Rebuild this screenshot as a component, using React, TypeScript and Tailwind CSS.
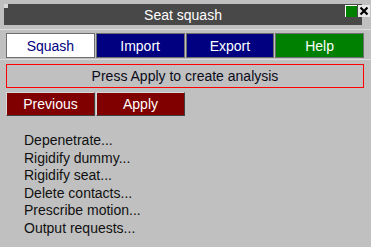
export default function App() {
  const items = [
    "Depenetrate...",
    "Rigidify dummy...",
    "Rigidify seat...",
    "Delete contacts...",
    "Prescribe motion...",
    "Output requests...",
  ];
  const tabs = [
    { label: "Squash", cls: "bg-white text-[#000080]" },
    { label: "Import", cls: "bg-[#000080] text-white" },
    { label: "Export", cls: "bg-[#000080] text-white" },
    { label: "Help", cls: "bg-[#008000] text-white" },
  ];

  return (
    <div
      className="relative w-[371px] h-[247px] overflow-hidden bg-[#c0c0c0] text-[14px] leading-none"
      style={{ fontFamily: '"Liberation Sans", Arial, sans-serif' }}
    >
      {/* Title bar */}
      <div className="relative mt-[4px] ml-[4px] w-[358px] h-[21px] bg-[#484848] text-white flex items-center justify-center">
        <span className="absolute left-0 top-0 w-[4px] h-[4px] bg-[#d8d8d8]" />
        Seat squash
      </div>
      <div className="absolute left-[345px] top-[5px] w-[12px] h-[12px] bg-[#008000] border-l border-t border-white" />
      <div className="absolute left-[358px] top-[5px] w-[12px] h-[12px] bg-[#e8e8e8] flex items-center justify-center">
        <svg width="10" height="10" viewBox="0 0 10 10">
          <path d="M1.5 1.5 L8.5 8.5 M8.5 1.5 L1.5 8.5" stroke="#000" strokeWidth="2.2" />
        </svg>
      </div>

      {/* Tabs */}
      <div className="mt-[4px] pt-[3px] border-t border-[#dcdcdc]">
        <div className="ml-[6px] w-[358px] flex gap-[1px]">
          {tabs.map((t) => (
            <div
              key={t.label}
              className={`flex-1 h-[25px] flex items-center justify-center border border-[#6e6e6e] ${t.cls}`}
            >
              {t.label}
            </div>
          ))}
        </div>
        <div className="mt-[1px] h-px bg-[#dcdcdc]" />
      </div>

      {/* Message */}
      <div className="mt-[4px] ml-[6px] w-[358px] h-[24px] border border-[#ff0000] flex items-center justify-center text-[#0a0a1a]">
        Press Apply to create analysis
      </div>

      {/* Buttons */}
      <div className="mt-[4px] ml-[6px] flex gap-[1px]">
        {["Previous", "Apply"].map((b) => (
          <div
            key={b}
            className="w-[89px] h-[24px] bg-[#800000] text-white flex items-center justify-center border-t border-l border-[#d8d8d8] border-r-[#404040] border-b-[#404040] border-r border-b"
          >
            {b}
          </div>
        ))}
      </div>

      {/* Options */}
      <div className="mt-[16px] ml-[24px] flex flex-col text-[#101010]">
        {items.map((i) => (
          <div key={i} className="leading-[17.6px]">
            {i}
          </div>
        ))}
      </div>
    </div>
  );
}
